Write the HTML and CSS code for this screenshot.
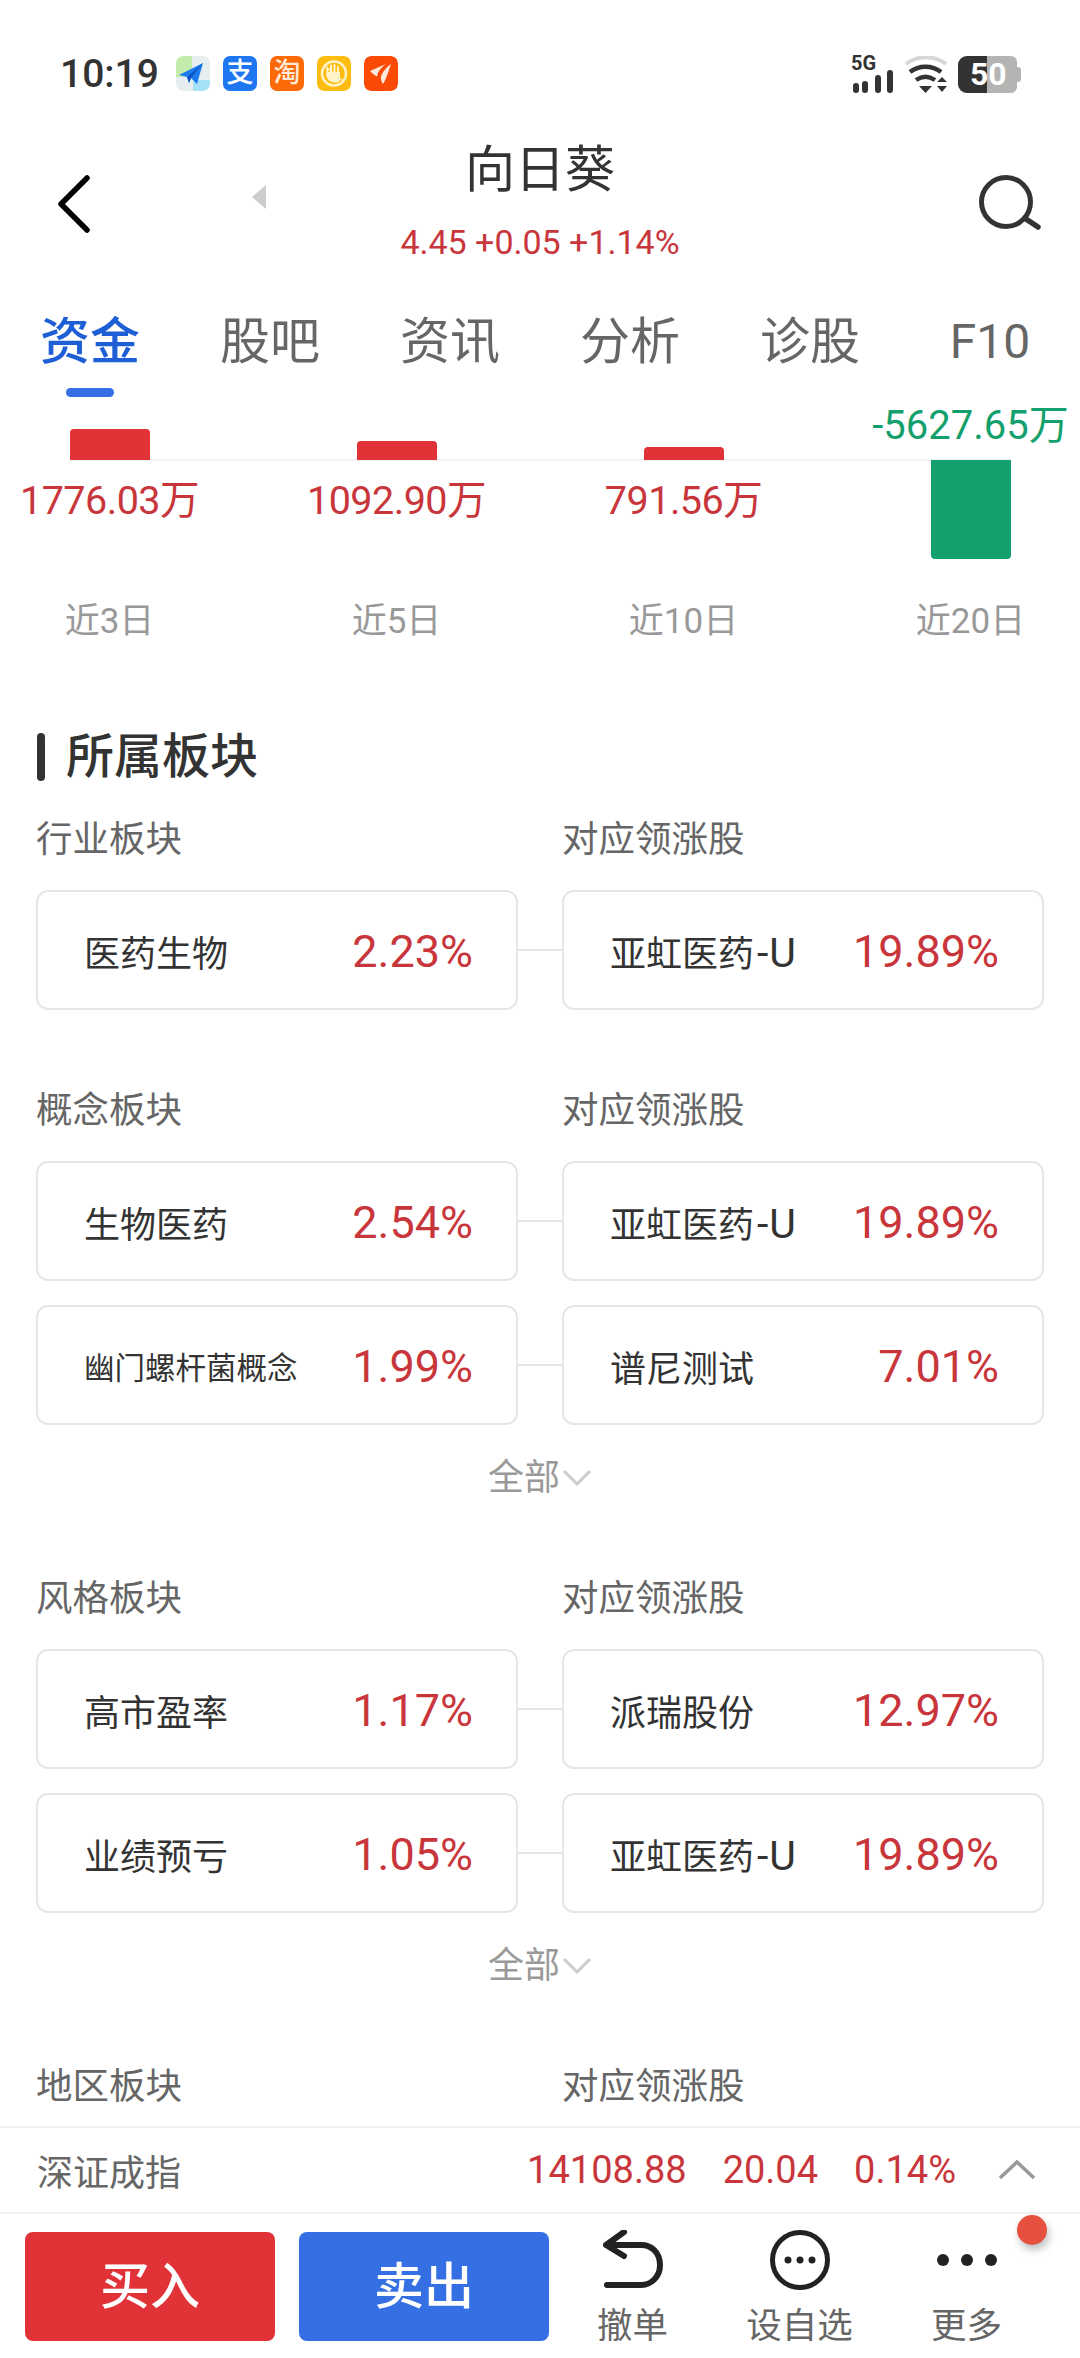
FILE: index.html
```html
<!DOCTYPE html>
<html lang="zh-CN">
<head>
    <meta charset="UTF-8">
    <meta name="viewport" content="width=device-width, initial-scale=1.0">
    <title>向日葵</title>
    <link rel="stylesheet" href="styles.css">
</head>
<body>
<div class="app">

    <div class="status">
        <span class="time">10:19</span>
        <div class="notify">
            <svg class="app-icon" viewBox="0 0 34 35">
                <rect width="34" height="35" rx="7" fill="#e6eef0"/>
                <path d="M0 7a7 7 0 0 1 7-7h9v21H0z" fill="#c3eba9"/>
                <path d="M17 24h17v4a7 7 0 0 1-7 7H17z" fill="#a5e2f7"/>
                <path d="M3 19 27 7 21 28 15 22 13 27 11 21z" fill="#1d7bf0"/>
                <path d="M11 21 27 7 15 22 13 27z" fill="#0e55c4"/>
            </svg>
            <div class="app-icon glyph zhi">支</div>
            <div class="app-icon glyph tao">淘</div>
            <svg class="app-icon" viewBox="0 0 34 35">
                <rect width="34" height="35" rx="7" fill="#fdbc0f"/>
                <circle cx="17" cy="17.500" r="12" fill="none" stroke="#fff3c9" stroke-width="2.500"/>
                <path d="M7 9 27 26" fill="none" stroke="#fff3c9" stroke-width="1.500"/>
                <path d="M11 18 10 13M14 17V9.500M17.500 17V9M21 18V11M13 24c-2-2-3-4-3-6l1-1h11v7c-1 2-7 2-9 0z" fill="#fff3c9" stroke="#fff3c9" stroke-width="2" stroke-linecap="round"/>
            </svg>
            <svg class="app-icon" viewBox="0 0 34 35">
                <rect width="34" height="35" rx="7" fill="#fa4a05"/>
                <path d="M6 15 22 8C18 11 15 14 14 17 13 19 14 21 12 20 10 19 8 17 6 15z" fill="#fde6dc"/>
                <path d="M27 8C25 14 22 24 19 28 17 25 16 21 18 18 20 14 24 10 27 8z" fill="#fde6dc"/>
            </svg>
        </div>
        <div class="sys">
            <div class="signal">
                <span class="five-g">5G</span>
                <svg class="signal-bars" viewBox="0 0 42 24">
                    <rect x="2" y="13" width="6" height="10" rx="3"/>
                    <rect x="11" y="11" width="6" height="12" rx="3"/>
                    <rect x="24" y="5" width="6" height="18" rx="3"/>
                    <rect x="36" y="0" width="6" height="23" rx="3"/>
                </svg>
            </div>
            <svg class="wifi" viewBox="0 0 44 38">
                <path d="M2 8C14 -1 30 -1 42 8" fill="none" stroke="#d6d6d6" stroke-width="4"/>
                <path d="M6 16C15 9 28 9 37 16M12 24C18 20 25 20 31 24" fill="none" stroke="#333" stroke-width="4.500"/>
                <path d="M15 30H28L21.500 37zM33 26 38 21 43 26zM33 30H43L38 36z" fill="#333"/>
            </svg>
            <div class="battery">
                <div class="battery-body"><div class="battery-fill"></div></div>
                <span class="battery-num">50</span>
            </div>
        </div>
    </div>

    <div class="nav">
        <svg class="back" viewBox="0 0 34 60"><path d="M30 4 4 30 30 56" fill="none" stroke="#000" stroke-width="5.500" stroke-linecap="round" stroke-linejoin="round"/></svg>
        <div class="prev-arrow"></div>
        <div class="nav-title">
            <div class="stock-name">向日葵</div>
            <div class="stock-price">4.45 +0.05 +1.14%</div>
        </div>
        <svg class="search" viewBox="0 0 62 58"><circle cx="27" cy="27" r="24.500" fill="none" stroke="#333" stroke-width="5"/><path d="M47 44 59 52" fill="none" stroke="#333" stroke-width="5.500" stroke-linecap="round"/></svg>
    </div>

    <div class="tabs">
        <div class="tab active">资金</div>
        <div class="tab">股吧</div>
        <div class="tab">资讯</div>
        <div class="tab">分析</div>
        <div class="tab">诊股</div>
        <div class="tab latin">F10</div>
    </div>

    <div class="content">
        <div class="chart">
            <div class="col">
                <div class="above"><div class="bar red h31"></div></div>
                <div class="below"><div class="val red-text">1776.03万</div></div>
                <div class="period">近3日</div>
            </div>
            <div class="col">
                <div class="above"><div class="bar red h19"></div></div>
                <div class="below"><div class="val red-text">1092.90万</div></div>
                <div class="period">近5日</div>
            </div>
            <div class="col">
                <div class="above"><div class="bar red h13"></div></div>
                <div class="below"><div class="val red-text">791.56万</div></div>
                <div class="period">近10日</div>
            </div>
            <div class="col">
                <div class="above"><div class="val green-text">-5627.65万</div></div>
                <div class="below"><div class="bar green"></div></div>
                <div class="period">近20日</div>
            </div>
        </div>

        <h2 class="heading">所属板块</h2>

        <div class="section first">
            <div class="labels"><span>行业板块</span><span>对应领涨股</span></div>
            <div class="pair">
                <div class="card"><span class="name">医药生物</span><span class="pct">2.23%</span></div>
                <div class="link"></div>
                <div class="card"><span class="name">亚虹医药<span class="suffix">-U</span></span><span class="pct">19.89%</span></div>
            </div>
        </div>

        <div class="section">
            <div class="labels"><span>概念板块</span><span>对应领涨股</span></div>
            <div class="pair">
                <div class="card"><span class="name">生物医药</span><span class="pct">2.54%</span></div>
                <div class="link"></div>
                <div class="card"><span class="name">亚虹医药<span class="suffix">-U</span></span><span class="pct">19.89%</span></div>
            </div>
            <div class="pair">
                <div class="card"><span class="name small">幽门螺杆菌概念</span><span class="pct">1.99%</span></div>
                <div class="link"></div>
                <div class="card"><span class="name">谱尼测试</span><span class="pct">7.01%</span></div>
            </div>
            <div class="more">全部<svg class="more-arrow" viewBox="0 0 30 20"><path d="M2 3 15 16 28 3" fill="none" stroke="#ccc" stroke-width="3"/></svg></div>
        </div>

        <div class="section">
            <div class="labels"><span>风格板块</span><span>对应领涨股</span></div>
            <div class="pair">
                <div class="card"><span class="name">高市盈率</span><span class="pct">1.17%</span></div>
                <div class="link"></div>
                <div class="card"><span class="name">派瑞股份</span><span class="pct">12.97%</span></div>
            </div>
            <div class="pair">
                <div class="card"><span class="name">业绩预亏</span><span class="pct">1.05%</span></div>
                <div class="link"></div>
                <div class="card"><span class="name">亚虹医药<span class="suffix">-U</span></span><span class="pct">19.89%</span></div>
            </div>
            <div class="more">全部<svg class="more-arrow" viewBox="0 0 30 20"><path d="M2 3 15 16 28 3" fill="none" stroke="#ccc" stroke-width="3"/></svg></div>
        </div>

        <div class="section">
            <div class="labels"><span>地区板块</span><span>对应领涨股</span></div>
        </div>
    </div>

    <div class="ticker">
        <span class="ticker-name">深证成指</span>
        <div class="ticker-nums"><span>14108.88</span><span>20.04</span><span>0.14%</span></div>
        <svg class="ticker-arrow" viewBox="0 0 38 20"><path d="M2 18 19 2 36 18" fill="none" stroke="#999" stroke-width="3.500"/></svg>
    </div>

    <div class="toolbar">
        <div class="btn buy">买入</div>
        <div class="btn sell">卖出</div>
        <div class="action">
            <svg class="action-icon" viewBox="0 0 60 60"><path d="M21 2 3 15 21 26M4 15H38C48 15 57 22 57 35 57 47 48 55 38 55H4" fill="none" stroke="#222" stroke-width="6" stroke-linecap="round" stroke-linejoin="round"/></svg>
            <span>撤单</span>
        </div>
        <div class="action">
            <svg class="action-icon" viewBox="0 0 60 60"><circle cx="30" cy="30" r="27.500" fill="none" stroke="#222" stroke-width="5"/><circle cx="18" cy="30" r="3.500" fill="#222"/><circle cx="30" cy="30" r="3.500" fill="#222"/><circle cx="42" cy="30" r="3.500" fill="#222"/></svg>
            <span>设自选</span>
        </div>
        <div class="action">
            <svg class="action-icon" viewBox="0 0 60 60"><circle cx="6" cy="30" r="6" fill="#222"/><circle cx="30" cy="30" r="6" fill="#222"/><circle cx="54" cy="30" r="6" fill="#222"/></svg>
            <span>更多</span>
            <div class="badge"></div>
        </div>
    </div>

</div>
</body>
</html>
```

FILE: styles.css
```css
* {
    box-sizing: border-box;
}
body {
    margin: 0;
    background-color: #ffffff;
    color: #333;
    font-family: Roboto, "Noto Sans CJK SC", sans-serif;
}
.app {
    width: 1080px;
    height: 2358px;
    display: flex;
    flex-direction: column;
    overflow: hidden;
}

/* barra de estado */
.status {
    height: 130px;
    padding: 56px 59px 0 60px;
    display: flex;
    align-items: flex-start;
}
.time {
    font-size: 39px;
    line-height: 37px;
    font-weight: 500;
    width: 116px;
}
.notify {
    display: flex;
    gap: 13px;
}
.app-icon {
    width: 34px;
    height: 35px;
    border-radius: 7px;
    display: block;
}
.glyph {
    color: #fff;
    font-size: 27px;
    line-height: 35px;
    text-align: center;
    font-weight: 500;
}
.zhi {
    background-color: #1e77f0;
}
.tao {
    background-color: #fb6a06;
    color: #ffe9d6;
}
.sys {
    margin-left: auto;
    display: flex;
    align-items: flex-start;
}
.signal {
    width: 42px;
    height: 38px;
}
.five-g {
    display: block;
    height: 14px;
    font-size: 20px;
    line-height: 15px;
    font-weight: 700;
    color: #333;
}
.signal-bars {
    display: block;
    width: 42px;
    height: 24px;
    fill: #333;
}
.wifi {
    width: 44px;
    height: 38px;
    margin-left: 11px;
}
.battery {
    position: relative;
    width: 63px;
    height: 37px;
    margin-left: 10px;
}
.battery::after {
    content: "";
    position: absolute;
    left: 59px;
    top: 11px;
    width: 4px;
    height: 15px;
    border-radius: 0 3px 3px 0;
    background-color: #b4b4b4;
}
.battery-body {
    width: 59px;
    height: 37px;
    background-color: #b4b4b4;
    border-radius: 9px 6px 6px 9px;
    overflow: hidden;
}
.battery-fill {
    width: 29px;
    height: 37px;
    background-color: #333;
}
.battery-num {
    position: absolute;
    left: 12px;
    top: 0;
    font-size: 32px;
    line-height: 37px;
    font-weight: 700;
    color: #fff;
}

/* cabecera */
.nav {
    position: relative;
    height: 150px;
}
.back {
    position: absolute;
    left: 57px;
    top: 44px;
    width: 34px;
    height: 60px;
}
.prev-arrow {
    position: absolute;
    left: 252px;
    top: 55px;
    width: 0;
    height: 0;
    border-top: 12px solid transparent;
    border-bottom: 12px solid transparent;
    border-right: 14px solid #cccccc;
}
.nav-title {
    text-align: center;
    padding-top: 12px;
}
.stock-name {
    font-size: 50px;
    line-height: 56px;
    color: #333;
}
.stock-price {
    font-size: 34px;
    line-height: 40px;
    margin-top: 24px;
    color: #c8363c;
}
.search {
    position: absolute;
    left: 979px;
    top: 45px;
    width: 62px;
    height: 58px;
}

/* pestañas */
.tabs {
    height: 120px;
    padding-top: 29px;
    display: grid;
    grid-template-columns: repeat(6, 180px);
    align-content: start;
}
.tab {
    text-align: center;
    font-size: 50px;
    line-height: 66px;
    color: #666;
    position: relative;
}
.tab.latin {
    font-size: 48px;
}
.tab.active {
    color: #1e5fd6;
    font-weight: 500;
}
.tab.active::after {
    content: "";
    position: absolute;
    left: 66px;
    top: 79px;
    width: 48px;
    height: 9px;
    border-radius: 5px;
    background-color: #346fe3;
}

.content {
    flex: 1;
    overflow: hidden;
}

/* grafico */
.chart {
    position: relative;
    display: grid;
    grid-template-columns: repeat(4, 287px);
    justify-content: center;
}
.chart::after {
    content: "";
    position: absolute;
    left: 70px;
    top: 59px;
    width: 941px;
    height: 2px;
    background-color: #f2f2f2;
}
.col {
    display: flex;
    flex-direction: column;
    align-items: center;
}
.above {
    height: 60px;
    display: flex;
    align-items: flex-end;
}
.below {
    height: 100px;
}
.bar {
    width: 80px;
    position: relative;
    z-index: 1;
}
.bar.red {
    background-color: #e03237;
    border-radius: 4px 4px 0 0;
}
.h31 { height: 31px; }
.h19 { height: 19px; }
.h13 { height: 13px; }
.bar.green {
    height: 99px;
    background-color: #14a06c;
    border-radius: 0 0 4px 4px;
}
.val {
    font-size: 39.500px;
    line-height: 36px;
    white-space: nowrap;
}
.below .val {
    margin-top: 23px;
    letter-spacing: -0.5px;
}
.above .val {
    font-size: 40px;
    margin-bottom: 16px;
}
.red-text {
    color: #c8363c;
}
.green-text {
    color: #14a06c;
}
.period {
    font-size: 35px;
    line-height: 40px;
    margin-top: 42px;
    color: #999;
}

.heading {
    margin: 91px 0 0 37px;
    padding-left: 29px;
    position: relative;
    font-size: 48px;
    line-height: 48px;
    font-weight: 500;
    color: #333;
}
.heading::before {
    content: "";
    position: absolute;
    left: 0;
    top: 0;
    width: 8px;
    height: 48px;
    border-radius: 4px;
    background-color: #333;
}

/* bloques */
.section {
    margin-top: 81px;
    padding: 0 36px 0 36px;
}
.section.first {
    margin-top: 39px;
}
.labels {
    display: grid;
    grid-template-columns: 1fr 1fr;
    column-gap: 44px;
    font-size: 36.500px;
    line-height: 40px;
    color: #666;
    margin-bottom: 30px;
}
.pair {
    display: grid;
    grid-template-columns: 1fr 44px 1fr;
    align-items: center;
    margin-bottom: 24px;
}
.pair:last-child {
    margin-bottom: 0;
}
.card {
    height: 120px;
    border: 2px solid #e6e6e6;
    border-radius: 12px;
    padding: 2px 43px 0 46px;
    display: flex;
    align-items: center;
    justify-content: space-between;
}
.name {
    font-size: 36px;
    color: #333;
    white-space: nowrap;
}
.name.small {
    font-size: 30.500px;
}
.suffix {
    font-size: 41px;
    margin-left: 3px;
    letter-spacing: 1px;
}
.pct {
    font-size: 45px;
    color: #c8363c;
}
.link {
    height: 2px;
    background-color: #e6e6e6;
}
.more {
    margin-top: 33px;
    height: 40px;
    line-height: 40px;
    font-size: 36px;
    color: #999;
    display: flex;
    justify-content: center;
    align-items: center;
}
.more-arrow {
    width: 30px;
    height: 20px;
    margin-left: 2px;
}

/* barra inferior */
.ticker {
    height: 88px;
    border-top: 2px solid #f2f2f2;
    border-bottom: 2px solid #f2f2f2;
    padding: 0 44px 0 37px;
    display: flex;
    align-items: center;
}
.ticker-name {
    font-size: 36px;
    color: #666;
}
.ticker-nums {
    margin-left: auto;
    display: flex;
    gap: 36px;
    font-size: 38px;
    color: #c8363c;
}
.ticker-arrow {
    width: 38px;
    height: 20px;
    margin-left: 42px;
}
.toolbar {
    height: 144px;
    padding: 18px 0 0 25px;
    display: flex;
    align-items: flex-start;
}
.btn {
    width: 250px;
    height: 109px;
    border-radius: 8px;
    color: #fff;
    font-size: 50px;
    line-height: 110px;
    font-weight: 500;
    text-align: center;
    margin-right: 24px;
}
.buy {
    background-color: #e03237;
}
.sell {
    background-color: #346fe3;
}
.action {
    position: relative;
    width: 167px;
    margin-top: -2px;
    display: flex;
    flex-direction: column;
    align-items: center;
    font-size: 35.500px;
    line-height: 40px;
    color: #666;
}
.action:nth-child(3) {
    margin-left: -24px;
}
.action-icon {
    width: 60px;
    height: 60px;
    margin-bottom: 16px;
}
.badge {
    position: absolute;
    left: 134px;
    top: -15px;
    width: 30px;
    height: 30px;
    border-radius: 50%;
    background-color: #e5503f;
    box-shadow: 2px 5px 8px rgba(0, 0, 0, 0.25);
}
```
